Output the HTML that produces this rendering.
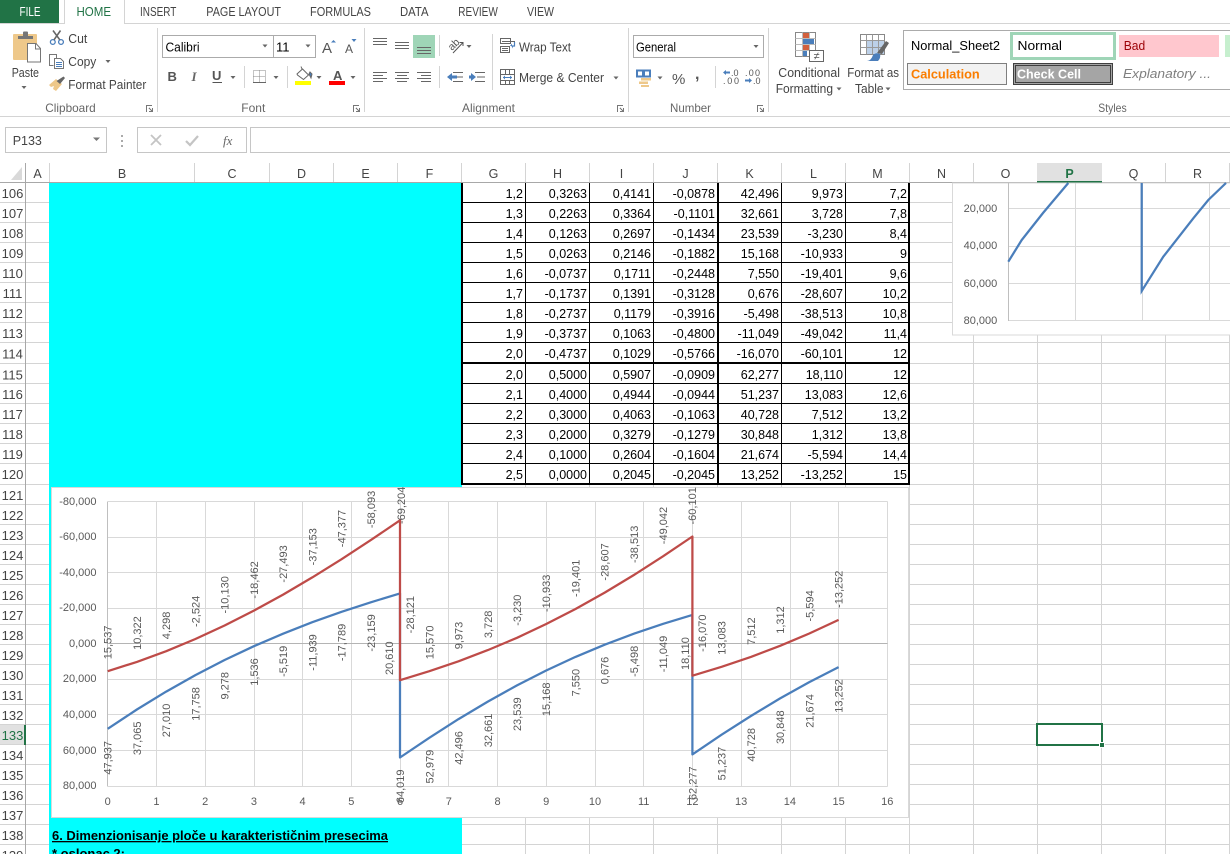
<!DOCTYPE html>
<html><head><meta charset="utf-8"><title>Excel</title>
<style>
html,body{margin:0;padding:0;background:#fff;width:1230px;height:854px;overflow:hidden}
svg{display:block;font-family:"Liberation Sans",sans-serif}
.t{font-size:13px;fill:#444}
.g{font-size:12px;fill:#666}
.r{font-size:12.5px;fill:#444}
.h{font-size:12.5px;fill:#444;text-anchor:middle}
.n{font-size:13px;fill:#444;text-anchor:middle}
.d{font-size:12.5px;fill:#000;text-anchor:end}
.a{font-size:11px;fill:#595959;text-anchor:end}
.x{font-size:11px;fill:#595959;text-anchor:middle}
.u{font-size:11px;fill:#595959;text-anchor:start}
.e{font-size:11px;fill:#595959;text-anchor:end}
.c{shape-rendering:crispEdges}
</style></head><body>
<svg width="1230" height="854" viewBox="0 0 1230 854" xmlns="http://www.w3.org/2000/svg">
<rect width="1230" height="854" fill="#fff"/>

<!-- tabs -->
<rect x="0" y="0" width="59" height="24" fill="#217346"/>
<path class="c" d="M0 23.5H64.5V0M124.5 0V23.5H1230" fill="none" stroke="#d4d4d4"/>
<text x="19.5" y="16" font-size="13" fill="#fff" textLength="21" lengthAdjust="spacingAndGlyphs">FILE</text>
<text x="76.5" y="16" font-size="13" fill="#217346" textLength="34.5" lengthAdjust="spacingAndGlyphs">HOME</text>
<text class="t" x="140" y="16" textLength="36.3" lengthAdjust="spacingAndGlyphs">INSERT</text>
<text class="t" x="206.3" y="16" textLength="74.7" lengthAdjust="spacingAndGlyphs">PAGE LAYOUT</text>
<text class="t" x="310" y="16" textLength="61" lengthAdjust="spacingAndGlyphs">FORMULAS</text>
<text class="t" x="400" y="16" textLength="28.5" lengthAdjust="spacingAndGlyphs">DATA</text>
<text class="t" x="458.3" y="16" textLength="39.5" lengthAdjust="spacingAndGlyphs">REVIEW</text>
<text class="t" x="527" y="16" textLength="27" lengthAdjust="spacingAndGlyphs">VIEW</text>

<!-- ribbon separators -->
<path class="c" d="M157.5 28V112M364.5 28V112M628.5 28V112M768.5 28V112" stroke="#d4d4d4" fill="none"/>
<path class="c" d="M0 116.5H1230" stroke="#d4d4d4"/>
<path class="c" d="M244.5 66V88M287.5 66V88M439.5 35V56M439.5 66V88M492.5 34V90M715.5 66V88" stroke="#d4d4d4" fill="none"/>

<!-- group labels -->
<text class="g" x="45.3" y="112" textLength="50.4" lengthAdjust="spacingAndGlyphs">Clipboard</text>
<text class="g" x="241.3" y="112" textLength="24" lengthAdjust="spacingAndGlyphs">Font</text>
<text class="g" x="462" y="112" textLength="53" lengthAdjust="spacingAndGlyphs">Alignment</text>
<text class="g" x="670" y="112" textLength="41" lengthAdjust="spacingAndGlyphs">Number</text>
<text class="g" x="1098.3" y="112" textLength="28.4" lengthAdjust="spacingAndGlyphs">Styles</text>
<g fill="none" stroke="#777">
<path class="c" d="M146.5 112V105.5H152M149 108l3 3M149 111.5h3.5V108"/>
<path class="c" d="M353.5 112V105.5H359M356 108l3 3M356 111.5h3.5V108"/>
<path class="c" d="M617.5 112V105.5H623M620 108l3 3M620 111.5h3.5V108"/>
<path class="c" d="M757.5 112V105.5H763M760 108l3 3M760 111.5h3.5V108"/>
</g>

<!-- clipboard -->
<rect x="13" y="34" width="24" height="26" rx="1" fill="#eec88a"/>
<path d="M18 39v-3h5v-3.500q0-1 1-1h3q1 0 1 1V36h5v3z" fill="#767676"/>
<path d="M27.500 43.500h8.500l4.500 5v13.500h-13z" fill="#fff" stroke="#767676"/>
<path d="M35.500 44v5h5" fill="none" stroke="#767676"/>
<text class="r" x="11.700" y="77" textLength="27.300" lengthAdjust="spacingAndGlyphs">Paste</text>
<path d="M21.500 86h5l-2.500 3z" fill="#666"/>
<circle cx="52.800" cy="42" r="2.400" fill="none" stroke="#4a7ebb" stroke-width="1.300"/>
<circle cx="61" cy="42" r="2.400" fill="none" stroke="#4a7ebb" stroke-width="1.300"/>
<path d="M54 39.800L60.500 30.500M59.800 39.800L53 30.500" stroke="#666" stroke-width="1.600" fill="none"/>
<text class="r" x="68.300" y="43" textLength="19" lengthAdjust="spacingAndGlyphs">Cut</text>
<path class="c" d="M53.500 65.500H49.500V54.500H56.500V58" fill="none" stroke="#777"/>
<path class="c" d="M54.500 58.500H60.500L63.500 61.500V68.500H54.500Z" fill="#fff" stroke="#777"/>
<path class="c" d="M56 62.500H62M56 64.500H62M56 66.500H62" stroke="#4a7ebb"/>
<text class="r" x="68.300" y="66" textLength="28" lengthAdjust="spacingAndGlyphs">Copy</text>
<path d="M105.500 60h5l-2.500 3z" fill="#666"/>
<path d="M49 85l7-6 6 5-6 7-3-2 1-3-3 1z" fill="#eec88a"/>
<path d="M56.500 81l7-4.500 1.500 1.500-5 6z" fill="#666"/>
<text class="r" x="68.300" y="89" textLength="78" lengthAdjust="spacingAndGlyphs">Format Painter</text>

<!-- font -->
<rect class="c" x="162.500" y="35.500" width="153" height="22" fill="#fff" stroke="#ababab"/>
<path class="c" d="M273.500 35.500V57.500" stroke="#ababab"/>
<text x="165.500" y="51.500" font-size="13" fill="#000" textLength="34" lengthAdjust="spacingAndGlyphs">Calibri</text>
<text x="276" y="51.500" font-size="13" fill="#000">11</text>
<path d="M262.500 44.500h5l-2.500 3zM305.500 44.500h5l-2.500 3z" fill="#666"/>
<text x="322" y="53" font-size="15" fill="#555">A</text>
<path d="M331 42.500l2.500-2.500 2.500 2.500z" fill="#4a7ebb"/>
<text x="345" y="53" font-size="12" fill="#555">A</text>
<path d="M351.500 39h5l-2.500 3z" fill="#4a7ebb"/>
<text x="167.500" y="81" font-size="13" font-weight="bold" fill="#555">B</text>
<text x="191.500" y="81" font-size="13" font-style="italic" font-weight="bold" fill="#666" font-family="Liberation Serif">I</text>
<text x="212" y="80" font-size="13" font-weight="bold" fill="#555">U</text>
<path class="c" d="M212.500 82.500H222" stroke="#555"/>
<path d="M230.500 76h5l-2.500 3zM273.500 76h5l-2.500 3zM316.500 76h5l-2.500 3zM350.500 76h5l-2.500 3z" fill="#666"/>
<rect class="c" x="253.500" y="70.500" width="12" height="12" fill="none" stroke="#888" stroke-dasharray="1 1"/>
<path class="c" d="M253.500 76.500H265.500M259.500 70.500V82.500" stroke="#888" stroke-dasharray="1 1"/>
<path class="c" d="M253 82.500H266" stroke="#666"/>
<path d="M297 74l5.500-5 6 6-5 4.500-6-4.500z" fill="#fff" stroke="#666"/>
<path d="M302 69l-1-2.500M309 74l2 4 1-4-2-2z" stroke="#666" fill="#4a7ebb"/>
<rect class="c" x="295" y="81" width="16" height="4" fill="#ffff00"/>
<text x="333" y="80" font-size="13" font-weight="bold" fill="#555">A</text>
<rect class="c" x="329" y="81" width="16" height="4" fill="#ff0000"/>

<!-- alignment -->
<rect class="c" x="413" y="35" width="22" height="23" fill="#9fd5b7"/>
<g class="c" stroke="#666" fill="none">
<path d="M373 38.500H387M373 41.500H387M373 44.500H387"/>
<path d="M395 42.500H409M395 45.500H409M395 48.500H409"/>
<path d="M417 47.500H431M417 50.500H431M417 53.500H431"/>
<path d="M373 72.500H387M373 75.500H383M373 78.500H387M373 81.500H383"/>
<path d="M395 72.500H409M397 75.500H407M395 78.500H409M397 81.500H407"/>
<path d="M417 72.500H431M421 75.500H431M417 78.500H431M421 81.500H431"/>
<path d="M453 72.500H463M457 77H463M453 81.500H463"/>
<path d="M475 72.500H485M477 77H485M475 81.500H485"/>
</g>
<path d="M447 77l5-4v2.500h5v3h-5v2.500z" fill="#4a7ebb"/>
<path d="M476 77l-5-4v2.500h-2v3h2v2.500z" fill="#4a7ebb"/>
<text transform="translate(452 51) rotate(-45)" font-size="10.500" fill="#555">ab</text>
<path d="M453 53L463 42.500M459.500 42.500H463V46" stroke="#555" fill="none"/>
<path d="M466.500 45h5l-2.500 3zM613.500 76.500h5l-2.500 3z" fill="#666"/>
<g class="c" fill="none" stroke="#666">
<rect x="500.500" y="38.500" width="10" height="5"/>
<rect x="500.500" y="46.500" width="9" height="6"/>
<path d="M502 41.500H515M502 48.500H508M502 50.500H508"/>
<rect x="500.500" y="69.500" width="14" height="15"/>
<path d="M500.500 74.500H514.500M500.500 80.500H514.500M505.500 69.500V74.500M509.500 69.500V74.500M505.500 80.500V84.500M509.500 80.500V84.500"/>
</g>
<path d="M514.500 42v4h-3" stroke="#4a7ebb" fill="none" stroke-width="1.200"/>
<path d="M513.500 46l-3.500 0 2-2.500v5z" fill="#4a7ebb"/>
<path class="c" d="M503 77.500H512" stroke="#4a7ebb"/>
<path d="M503 77.500l2-2v4zM512 77.500l-2-2v4z" fill="#4a7ebb"/>
<text class="r" x="519" y="51.500" textLength="52" lengthAdjust="spacingAndGlyphs">Wrap Text</text>
<text class="r" x="519" y="82" textLength="85" lengthAdjust="spacingAndGlyphs">Merge &amp; Center</text>

<!-- number -->
<rect class="c" x="633.500" y="35.500" width="130" height="22" fill="#fff" stroke="#ababab"/>
<text x="636" y="51.500" font-size="13" fill="#000" textLength="40" lengthAdjust="spacingAndGlyphs">General</text>
<path d="M753.500 45h5l-2.500 3z" fill="#666"/>
<rect class="c" x="636" y="69.500" width="15" height="8" fill="#4a7ebb"/>
<rect class="c" x="638" y="71.500" width="11" height="4" fill="#fff"/>
<rect class="c" x="642" y="71" width="3" height="5" fill="#4a7ebb"/>
<rect class="c" x="641" y="78" width="10" height="2.500" fill="#eec88a"/>
<rect class="c" x="639" y="81.500" width="9" height="2.500" fill="#eec88a"/>
<rect class="c" x="641" y="85" width="8" height="2" fill="#eec88a"/>
<path d="M657.500 76.500h5l-2.500 3z" fill="#666"/>
<text x="672" y="84" font-size="15" fill="#555">%</text>
<text x="695" y="79" font-size="16" font-weight="bold" fill="#555">,</text>
<text x="731" y="76" font-size="9" fill="#555">.0</text>
<text x="723" y="84" font-size="9" fill="#555" textLength="16">.00</text>
<path d="M723 72.500l3-2.500v1.500h4v2h-4v1.500z" fill="#4a7ebb"/>
<text x="745" y="76" font-size="9" fill="#555" textLength="15">.00</text>
<text x="753" y="84" font-size="9" fill="#555">.0</text>
<path d="M752 80.500l-3-2.500v1.500h-4v2h4v1.500z" fill="#4a7ebb"/>

<!-- conditional formatting -->
<g class="c">
<rect x="795.500" y="32.500" width="20" height="24" fill="#fff" stroke="#888"/>
<path d="M802.500 32.500V56.500M809.500 32.500V56.500M795.500 38.500H815.500M795.500 44.500H815.500M795.500 50.500H815.500" stroke="#bbb" fill="none"/>
<rect x="803" y="33" width="6" height="5" fill="#d2603d"/>
<rect x="803" y="39" width="11" height="5" fill="#4a7ebb"/>
<rect x="803" y="45" width="6" height="5" fill="#d2603d"/>
<rect x="803" y="51" width="4" height="5" fill="#4a7ebb"/>
<rect x="809.500" y="50.500" width="14" height="11" fill="#fff" stroke="#666"/>
</g>
<text x="816.500" y="59.500" font-size="11" fill="#555" text-anchor="middle">≠</text>
<text class="r" x="778.300" y="77" textLength="61.700" lengthAdjust="spacingAndGlyphs">Conditional</text>
<text class="r" x="775.700" y="93" textLength="57.300" lengthAdjust="spacingAndGlyphs">Formatting</text>
<path d="M836.500 87.500h5l-2.500 3z" fill="#666"/>

<!-- format as table -->
<g class="c">
<rect x="860.500" y="34.500" width="24" height="20" fill="#fff" stroke="#888"/>
<rect x="867" y="41" width="17" height="13" fill="#bcd0e8"/>
<path d="M860.500 40.500H884.500M860.500 47.500H884.500M866.500 34.500V54.500M872.500 34.500V54.500M878.500 34.500V54.500" stroke="#999" fill="none"/>
</g>
<path d="M877 53l9-12 3 2-7 11z" fill="#666"/>
<path d="M867 61q4 0 6-6 3-3 7-1 1 4-2 7z" fill="#4a7ebb"/>
<text class="r" x="847.300" y="77" textLength="51.700" lengthAdjust="spacingAndGlyphs">Format as</text>
<text class="r" x="855" y="93" textLength="28.500" lengthAdjust="spacingAndGlyphs">Table</text>
<path d="M885.500 87.500h5l-2.500 3z" fill="#666"/>

<!-- style gallery -->
<path class="c" d="M1230 30.500H903.500V89.500H1230" fill="#fff" stroke="#ababab"/>
<text x="911" y="50" font-size="12.800" fill="#000" textLength="89" lengthAdjust="spacingAndGlyphs">Normal_Sheet2</text>
<rect class="c" x="1011.500" y="33.500" width="103" height="25" fill="#fff" stroke="#9fd5b7" stroke-width="3"/>
<text x="1017.500" y="50" font-size="13" fill="#000" textLength="44.500" lengthAdjust="spacingAndGlyphs">Normal</text>
<rect class="c" x="1119" y="35" width="100" height="22" fill="#ffc7ce"/>
<text x="1123.700" y="50" font-size="13" fill="#9c0006" textLength="21.500" lengthAdjust="spacingAndGlyphs">Bad</text>
<rect class="c" x="1225" y="35" width="5" height="22" fill="#c6efce"/>
<rect class="c" x="907.500" y="63.500" width="99" height="21" fill="#f2f2f2" stroke="#7f7f7f"/>
<text x="911" y="78.500" font-size="13" font-weight="bold" fill="#fa7d00" textLength="68.700" lengthAdjust="spacingAndGlyphs">Calculation</text>
<rect class="c" x="1013.500" y="63.500" width="99" height="21" fill="#a5a5a5" stroke="#3f3f3f"/>
<rect class="c" x="1015.500" y="65.500" width="95" height="17" fill="none" stroke="#3f3f3f"/>
<text x="1017" y="78.500" font-size="13" font-weight="bold" fill="#fff" textLength="64" lengthAdjust="spacingAndGlyphs">Check Cell</text>
<text x="1123" y="78" font-size="13" font-style="italic" fill="#7f7f7f" textLength="88" lengthAdjust="spacingAndGlyphs">Explanatory ...</text>

<!-- formula bar -->
<rect class="c" x="5.500" y="127.500" width="101" height="25" fill="#fff" stroke="#c6c6c6"/>
<text x="12.700" y="145" font-size="12.500" fill="#444">P133</text>
<path d="M93 137.500h7l-3.500 3.500z" fill="#777"/>
<path class="c" d="M122 135v2M122 140v2M122 145v2" stroke="#aaa" stroke-width="2"/>
<rect class="c" x="137.500" y="127.500" width="109" height="25" fill="#fff" stroke="#c6c6c6"/>
<path d="M151 135l10 10M161 135l-10 10" stroke="#c4c4c4" stroke-width="1.800" fill="none"/>
<path d="M186 141l4 4 8-9" stroke="#c4c4c4" stroke-width="2.200" fill="none"/>
<text x="223" y="145" font-size="13" font-style="italic" fill="#666" font-family="Liberation Serif">fx</text>
<rect class="c" x="250.500" y="127.500" width="990" height="25" fill="#fff" stroke="#c6c6c6"/>

<!-- grid -->
<g class="c" stroke="#d4d4d4" fill="none">
<path d="M0 202.500H1230M0 222.500H1230M0 242.500H1230M0 262.500H1230M0 282.500H1230M0 302.500H1230M0 322.500H1230M0 342.500H1230M0 363.500H1230M0 383.500H1230M0 403.500H1230M0 423.500H1230M0 443.500H1230M0 463.500H1230M0 484.500H1230M0 504.500H1230M0 524.500H1230M0 544.500H1230M0 564.500H1230M0 584.500H1230M0 604.500H1230M0 624.500H1230M0 644.500H1230M0 664.500H1230M0 684.500H1230M0 704.500H1230M0 724.500H1230M0 744.500H1230M0 764.500H1230M0 784.500H1230M0 804.500H1230M0 824.500H1230M0 844.500H1230"/>
<path d="M49.500 183V854M525.500 183V854M589.500 183V854M653.500 183V854M717.500 183V854M781.500 183V854M845.500 183V854M909.500 183V854M973.500 183V854M1037.500 183V854M1101.500 183V854M1165.500 183V854M1229.500 183V854"/>
<path d="M49.500 163V182M194.500 163V182M269.500 163V182M333.500 163V182M397.500 163V182M461.500 163V182M525.500 163V182M589.500 163V182M653.500 163V182M717.500 163V182M781.500 163V182M845.500 163V182M909.500 163V182M973.500 163V182M1165.500 163V182M1229.500 163V182"/>
</g>
<!-- header corner -->
<path d="M22 167V180H11z" fill="#d9d9d9"/>
<!-- selected column & row headers -->
<rect class="c" x="1037" y="163" width="65" height="19" fill="#e1e1e1"/>
<rect class="c" x="1037" y="181" width="65" height="2" fill="#217346"/>
<rect class="c" x="0" y="725" width="24" height="19" fill="#e1e1e1"/>
<path class="c" d="M0 182.500H1037M1102 182.500H1230" stroke="#a8a8a8"/>
<path class="c" d="M25.500 163V854" stroke="#a8a8a8"/>
<rect class="c" x="24" y="725" width="2" height="20" fill="#217346"/>

<g>
<text class="h" x="37.500" y="178">A</text><text class="h" x="122" y="178">B</text><text class="h" x="232" y="178">C</text><text class="h" x="301.500" y="178">D</text><text class="h" x="365.500" y="178">E</text><text class="h" x="429.500" y="178">F</text><text class="h" x="493.500" y="178">G</text><text class="h" x="557.500" y="178">H</text><text class="h" x="621.500" y="178">I</text><text class="h" x="685.500" y="178">J</text><text class="h" x="749.500" y="178">K</text><text class="h" x="813.500" y="178">L</text><text class="h" x="877.500" y="178">M</text><text class="h" x="941.500" y="178">N</text><text class="h" x="1005.500" y="178">O</text><text class="h" x="1069.500" y="178" font-weight="bold" style="fill:#217346">P</text><text class="h" x="1133.500" y="178">Q</text><text class="h" x="1197.500" y="178">R</text>
</g>
<g>
<text class="n" x="12.500" y="198">106</text><text class="n" x="12.500" y="218">107</text><text class="n" x="12.500" y="238">108</text><text class="n" x="12.500" y="258">109</text><text class="n" x="12.500" y="278">110</text><text class="n" x="12.500" y="298">111</text><text class="n" x="12.500" y="318">112</text><text class="n" x="12.500" y="338">113</text><text class="n" x="12.500" y="358.500">114</text><text class="n" x="12.500" y="379.500">115</text><text class="n" x="12.500" y="399">116</text><text class="n" x="12.500" y="419">117</text><text class="n" x="12.500" y="439">118</text><text class="n" x="12.500" y="459">119</text><text class="n" x="12.500" y="479">120</text><text class="n" x="12.500" y="500">121</text><text class="n" x="12.500" y="520">122</text><text class="n" x="12.500" y="540">123</text><text class="n" x="12.500" y="560">124</text><text class="n" x="12.500" y="580">125</text><text class="n" x="12.500" y="600">126</text><text class="n" x="12.500" y="620">127</text><text class="n" x="12.500" y="640">128</text><text class="n" x="12.500" y="660">129</text><text class="n" x="12.500" y="680">130</text><text class="n" x="12.500" y="700">131</text><text class="n" x="12.500" y="720">132</text><text class="n" x="12.500" y="740" style="fill:#217346">133</text><text class="n" x="12.500" y="760">134</text><text class="n" x="12.500" y="780">135</text><text class="n" x="12.500" y="800">136</text><text class="n" x="12.500" y="820">137</text><text class="n" x="12.500" y="840">138</text><text class="n" x="12.500" y="860">139</text>
</g>

<!-- cyan -->
<rect class="c" x="49" y="183" width="413" height="304" fill="#00ffff"/>
<rect class="c" x="49" y="487" width="3" height="330" fill="#00ffff"/>
<rect class="c" x="49" y="817" width="413" height="37" fill="#00ffff"/>
<text x="52" y="840" font-size="13" font-weight="bold" fill="#000" text-decoration="underline" textLength="336" lengthAdjust="spacingAndGlyphs">6. Dimenzionisanje ploče u karakterističnim presecima</text>
<text x="52" y="858" font-size="13" font-weight="bold" fill="#000" text-decoration="underline">* oslonac 2:</text>

<!-- table lines -->
<g class="c" fill="#000">
<rect x="461" y="183" width="2" height="302"/>
<rect x="908" y="183" width="2" height="302"/>
<rect x="717" y="183" width="2" height="302"/>
<rect x="525" y="183" width="1" height="302"/>
<rect x="589" y="183" width="1" height="302"/>
<rect x="653" y="183" width="1" height="302"/>
<rect x="781" y="183" width="1" height="302"/>
<rect x="845" y="183" width="1" height="302"/>
<rect x="461" y="202" width="449" height="1"/>
<rect x="461" y="222" width="449" height="1"/>
<rect x="461" y="242" width="449" height="1"/>
<rect x="461" y="262" width="449" height="1"/>
<rect x="461" y="282" width="449" height="1"/>
<rect x="461" y="302" width="449" height="1"/>
<rect x="461" y="322" width="449" height="1"/>
<rect x="461" y="342" width="449" height="1"/>
<rect x="461" y="362" width="449" height="2"/>
<rect x="461" y="383" width="449" height="1"/>
<rect x="461" y="403" width="449" height="1"/>
<rect x="461" y="423" width="449" height="1"/>
<rect x="461" y="443" width="449" height="1"/>
<rect x="461" y="463" width="449" height="1"/>
<rect x="461" y="483" width="449" height="2"/>
</g>

<!-- table text -->
<g class="d">
<text y="198"><tspan x="523">1,2</tspan><tspan x="587">0,3263</tspan><tspan x="651">0,4141</tspan><tspan x="715">-0,0878</tspan><tspan x="779">42,496</tspan><tspan x="843">9,973</tspan><tspan x="907">7,2</tspan></text>
<text y="218"><tspan x="523">1,3</tspan><tspan x="587">0,2263</tspan><tspan x="651">0,3364</tspan><tspan x="715">-0,1101</tspan><tspan x="779">32,661</tspan><tspan x="843">3,728</tspan><tspan x="907">7,8</tspan></text>
<text y="238"><tspan x="523">1,4</tspan><tspan x="587">0,1263</tspan><tspan x="651">0,2697</tspan><tspan x="715">-0,1434</tspan><tspan x="779">23,539</tspan><tspan x="843">-3,230</tspan><tspan x="907">8,4</tspan></text>
<text y="258"><tspan x="523">1,5</tspan><tspan x="587">0,0263</tspan><tspan x="651">0,2146</tspan><tspan x="715">-0,1882</tspan><tspan x="779">15,168</tspan><tspan x="843">-10,933</tspan><tspan x="907">9</tspan></text>
<text y="278"><tspan x="523">1,6</tspan><tspan x="587">-0,0737</tspan><tspan x="651">0,1711</tspan><tspan x="715">-0,2448</tspan><tspan x="779">7,550</tspan><tspan x="843">-19,401</tspan><tspan x="907">9,6</tspan></text>
<text y="298"><tspan x="523">1,7</tspan><tspan x="587">-0,1737</tspan><tspan x="651">0,1391</tspan><tspan x="715">-0,3128</tspan><tspan x="779">0,676</tspan><tspan x="843">-28,607</tspan><tspan x="907">10,2</tspan></text>
<text y="318"><tspan x="523">1,8</tspan><tspan x="587">-0,2737</tspan><tspan x="651">0,1179</tspan><tspan x="715">-0,3916</tspan><tspan x="779">-5,498</tspan><tspan x="843">-38,513</tspan><tspan x="907">10,8</tspan></text>
<text y="338"><tspan x="523">1,9</tspan><tspan x="587">-0,3737</tspan><tspan x="651">0,1063</tspan><tspan x="715">-0,4800</tspan><tspan x="779">-11,049</tspan><tspan x="843">-49,042</tspan><tspan x="907">11,4</tspan></text>
<text y="358"><tspan x="523">2,0</tspan><tspan x="587">-0,4737</tspan><tspan x="651">0,1029</tspan><tspan x="715">-0,5766</tspan><tspan x="779">-16,070</tspan><tspan x="843">-60,101</tspan><tspan x="907">12</tspan></text>
<text y="379"><tspan x="523">2,0</tspan><tspan x="587">0,5000</tspan><tspan x="651">0,5907</tspan><tspan x="715">-0,0909</tspan><tspan x="779">62,277</tspan><tspan x="843">18,110</tspan><tspan x="907">12</tspan></text>
<text y="399"><tspan x="523">2,1</tspan><tspan x="587">0,4000</tspan><tspan x="651">0,4944</tspan><tspan x="715">-0,0944</tspan><tspan x="779">51,237</tspan><tspan x="843">13,083</tspan><tspan x="907">12,6</tspan></text>
<text y="419"><tspan x="523">2,2</tspan><tspan x="587">0,3000</tspan><tspan x="651">0,4063</tspan><tspan x="715">-0,1063</tspan><tspan x="779">40,728</tspan><tspan x="843">7,512</tspan><tspan x="907">13,2</tspan></text>
<text y="439"><tspan x="523">2,3</tspan><tspan x="587">0,2000</tspan><tspan x="651">0,3279</tspan><tspan x="715">-0,1279</tspan><tspan x="779">30,848</tspan><tspan x="843">1,312</tspan><tspan x="907">13,8</tspan></text>
<text y="459"><tspan x="523">2,4</tspan><tspan x="587">0,1000</tspan><tspan x="651">0,2604</tspan><tspan x="715">-0,1604</tspan><tspan x="779">21,674</tspan><tspan x="843">-5,594</tspan><tspan x="907">14,4</tspan></text>
<text y="479"><tspan x="523">2,5</tspan><tspan x="587">0,0000</tspan><tspan x="651">0,2045</tspan><tspan x="715">-0,2045</tspan><tspan x="779">13,252</tspan><tspan x="843">-13,252</tspan><tspan x="907">15</tspan></text>
</g>

<!-- second chart (top right) -->
<rect class="c" x="952.500" y="183" width="290" height="152" fill="#fff" stroke="#d9d9d9"/>
<path class="c" d="M1008.500 208.500H1230M1008.500 246.500H1230M1008.500 283.500H1230M1008.500 320.500H1230M1075.500 183V320M1142.500 183V320M1209.500 183V320" stroke="#d9d9d9" fill="none"/>
<path class="c" d="M1008.500 183V321" stroke="#bfbfbf"/>
<path d="M1008.300 261.700L1021.700 240L1043 213L1068.300 183" fill="none" stroke="#4a7ebb" stroke-width="2.250"/>
<path d="M1141.700 183V291L1163.300 256.700L1193.300 218.300L1208.300 200L1226 183" fill="none" stroke="#4a7ebb" stroke-width="2.250"/>
<g class="a"><text x="997.300" y="212">20,000</text><text x="997.300" y="249">40,000</text><text x="997.300" y="287">60,000</text><text x="997.300" y="324">80,000</text></g>

<!-- main chart -->
<rect class="c" x="51.500" y="487.500" width="857" height="330" fill="#fff" stroke="#d9d9d9"/>
<path class="c" d="M108 501.500H887.500M108 537.500H887.500M108 572.500H887.500M108 608.500H887.500M108 679.500H887.500M108 714.500H887.500M108 750.500H887.500M108 786.500H887.500M156.500 501.500V786.500M205.500 501.500V786.500M254.500 501.500V786.500M302.500 501.500V786.500M351.500 501.500V786.500M400.500 501.500V786.500M448.500 501.500V786.500M497.500 501.500V786.500M546.500 501.500V786.500M595.500 501.500V786.500M643.500 501.500V786.500M692.500 501.500V786.500M741.500 501.500V786.500M790.500 501.500V786.500M838.500 501.500V786.500M887.500 501.500V786.500" stroke="#d9d9d9" fill="none"/>
<path class="c" d="M107.500 501.500V786.500" stroke="#bfbfbf"/>
<path class="c" d="M108 643.500H887.500" stroke="#b4b4b4"/>
<path fill="none" stroke="#4a7ebb" stroke-width="2.250" stroke-linejoin="round" d="M107.700 728.800L136.900 709.500L166.200 691.600L195.400 675.100L224.600 660L253.900 646.200L283.100 633.700L312.300 622.200L341.600 611.800L370.800 602.300L400 593.400V757.500L429.300 737.800L458.500 719.100L487.800 701.600L517 685.400L546.200 670.500L575.500 656.900L604.700 644.700L633.900 633.700L663.200 623.800L692.400 614.900V754.400L721.600 734.700L750.900 716L780.100 698.400L809.300 682.100L838.600 667.100"/>
<path fill="none" stroke="#be4b48" stroke-width="2.250" stroke-linejoin="round" d="M107.700 671.200L136.900 661.900L166.200 651.200L195.400 639L224.600 625.500L253.900 610.600L283.100 594.600L312.300 577.400L341.600 559.200L370.800 540.100L400 520.300V680.200L429.300 671.200L458.500 661.300L487.800 650.100L517 637.800L546.200 624L575.500 609L604.700 592.600L633.900 575L663.200 556.200L692.400 536.500V675.700L721.600 666.800L750.900 656.900L780.100 645.800L809.300 633.500L838.600 619.900"/>
<g class="a"><text x="96.500" y="505">-80,000</text><text x="96.500" y="540">-60,000</text><text x="96.500" y="576">-40,000</text><text x="96.500" y="611">-20,000</text><text x="96.500" y="647">0,000</text><text x="96.500" y="682">20,000</text><text x="96.500" y="718">40,000</text><text x="96.500" y="754">60,000</text><text x="96.500" y="789">80,000</text></g>
<g class="x"><text x="107.700" y="805">0</text><text x="156.400" y="805">1</text><text x="205.200" y="805">2</text><text x="253.900" y="805">3</text><text x="302.600" y="805">4</text><text x="351.300" y="805">5</text><text x="400" y="805">6</text><text x="448.800" y="805">7</text><text x="497.500" y="805">8</text><text x="546.200" y="805">9</text><text x="595" y="805">10</text><text x="643.700" y="805">11</text><text x="692.400" y="805">12</text><text x="741.100" y="805">13</text><text x="789.900" y="805">14</text><text x="838.600" y="805">15</text><text x="887.300" y="805">16</text></g>

<!-- blue labels -->
<g class="e">
<text transform="translate(111.700 741)rotate(-90)">47,937</text>
<text transform="translate(140.900 721.500)rotate(-90)">37,065</text>
<text transform="translate(170.200 703.600)rotate(-90)">27,010</text>
<text transform="translate(199.400 687.100)rotate(-90)">17,758</text>
<text transform="translate(228.600 672)rotate(-90)">9,278</text>
<text transform="translate(257.900 658.200)rotate(-90)">1,536</text>
<text transform="translate(287.100 645.700)rotate(-90)">-5,519</text>
<text transform="translate(316.300 634.200)rotate(-90)">-11,939</text>
<text transform="translate(345.600 623.800)rotate(-90)">-17,789</text>
<text transform="translate(374.800 614.300)rotate(-90)">-23,159</text>
<text transform="translate(414 596)rotate(-90)">-28,121</text>
<text transform="translate(404 769.500)rotate(-90)">64,019</text>
<text transform="translate(433.300 749.800)rotate(-90)">52,979</text>
<text transform="translate(462.500 731.100)rotate(-90)">42,496</text>
<text transform="translate(491.800 713.600)rotate(-90)">32,661</text>
<text transform="translate(521 697.400)rotate(-90)">23,539</text>
<text transform="translate(550.200 682.500)rotate(-90)">15,168</text>
<text transform="translate(579.500 668.900)rotate(-90)">7,550</text>
<text transform="translate(608.700 656.700)rotate(-90)">0,676</text>
<text transform="translate(637.900 645.700)rotate(-90)">-5,498</text>
<text transform="translate(667.200 635.800)rotate(-90)">-11,049</text>
<text transform="translate(706 614.500)rotate(-90)">-16,070</text>
<text transform="translate(696.400 766.400)rotate(-90)">62,277</text>
<text transform="translate(725.600 746.700)rotate(-90)">51,237</text>
<text transform="translate(754.900 728)rotate(-90)">40,728</text>
<text transform="translate(784.100 710.400)rotate(-90)">30,848</text>
<text transform="translate(813.300 694.100)rotate(-90)">21,674</text>
<text transform="translate(842.600 679.100)rotate(-90)">13,252</text>
</g>
<!-- red labels -->
<g class="u">
<text transform="translate(111.700 659.200)rotate(-90)">15,537</text>
<text transform="translate(140.900 649.900)rotate(-90)">10,322</text>
<text transform="translate(170.200 639.200)rotate(-90)">4,298</text>
<text transform="translate(199.400 627)rotate(-90)">-2,524</text>
<text transform="translate(228.600 613.500)rotate(-90)">-10,130</text>
<text transform="translate(257.900 598.600)rotate(-90)">-18,462</text>
<text transform="translate(287.100 582.600)rotate(-90)">-27,493</text>
<text transform="translate(316.300 565.400)rotate(-90)">-37,153</text>
<text transform="translate(345.600 547.200)rotate(-90)">-47,377</text>
<text transform="translate(374.800 528.100)rotate(-90)">-58,093</text>
<text transform="translate(405 524)rotate(-90)">-69,204</text>
<text transform="translate(393 675)rotate(-90)">20,610</text>
<text transform="translate(433.300 659.200)rotate(-90)">15,570</text>
<text transform="translate(462.500 649.300)rotate(-90)">9,973</text>
<text transform="translate(491.800 638.100)rotate(-90)">3,728</text>
<text transform="translate(521 625.800)rotate(-90)">-3,230</text>
<text transform="translate(550.200 612)rotate(-90)">-10,933</text>
<text transform="translate(579.500 597)rotate(-90)">-19,401</text>
<text transform="translate(608.700 580.600)rotate(-90)">-28,607</text>
<text transform="translate(637.900 563)rotate(-90)">-38,513</text>
<text transform="translate(667.200 544.200)rotate(-90)">-49,042</text>
<text transform="translate(696 524.500)rotate(-90)">-60,101</text>
<text transform="translate(689 670)rotate(-90)">18,110</text>
<text transform="translate(725.600 654.800)rotate(-90)">13,083</text>
<text transform="translate(754.900 644.900)rotate(-90)">7,512</text>
<text transform="translate(784.100 633.800)rotate(-90)">1,312</text>
<text transform="translate(813.300 621.500)rotate(-90)">-5,594</text>
<text transform="translate(842.600 607.900)rotate(-90)">-13,252</text>
</g>

<!-- selected cell -->
<rect class="c" x="1037" y="724" width="65" height="21" fill="#fff" stroke="#217346" stroke-width="2"/>
<rect class="c" x="1099" y="742" width="6" height="6" fill="#fff"/>
<rect class="c" x="1100" y="743" width="4" height="4" fill="#217346"/>
</svg>
</body></html>
